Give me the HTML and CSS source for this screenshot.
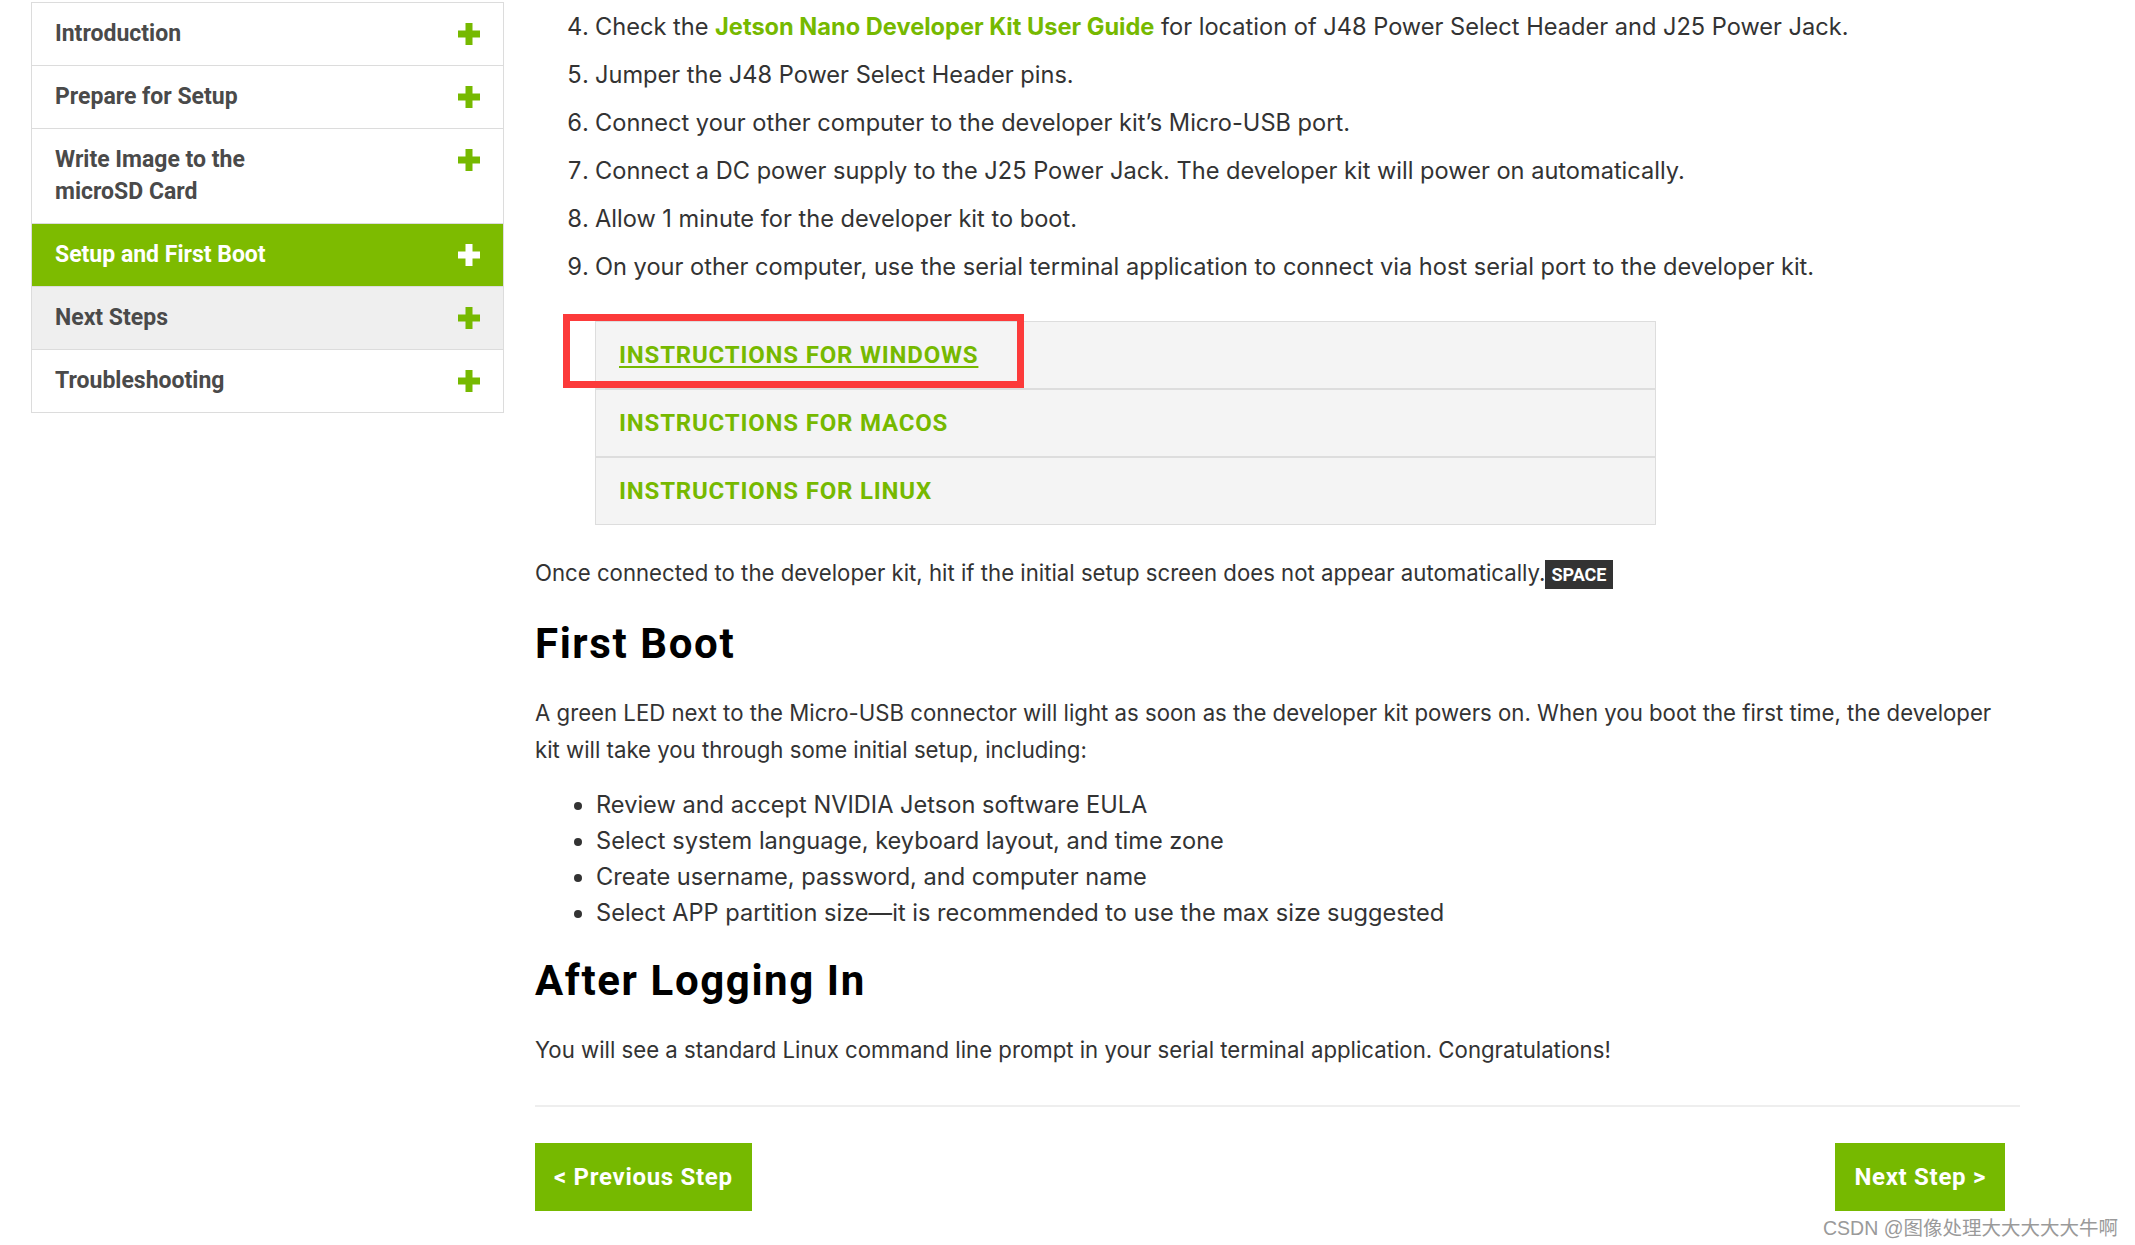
FILE: index.html
```html
<!DOCTYPE html>
<html lang="en">
<head>
    <meta charset="UTF-8">
    <meta name="viewport" content="width=device-width, initial-scale=1.0">
    <title>Setup and First Boot</title>

    <link rel="stylesheet" href="styles.css">

</head>

<body>
    <div class="page">
        <!-- Steps menu -->
        <aside class="sidebar">
            <div class="step-row">
                <span class="step-name">Introduction</span>
                <svg class="plus" viewBox="0 0 22 22"><rect x="7.5" y="0" width="7" height="22"/><rect x="0" y="7.5" width="22" height="7"/></svg>
            </div>
            <div class="step-row">
                <span class="step-name">Prepare for Setup</span>
                <svg class="plus" viewBox="0 0 22 22"><rect x="7.5" y="0" width="7" height="22"/><rect x="0" y="7.5" width="22" height="7"/></svg>
            </div>
            <div class="step-row">
                <span class="step-name">Write Image to the<br>microSD Card</span>
                <svg class="plus" viewBox="0 0 22 22"><rect x="7.5" y="0" width="7" height="22"/><rect x="0" y="7.5" width="22" height="7"/></svg>
            </div>
            <div class="step-row active">
                <span class="step-name">Setup and First Boot</span>
                <svg class="plus" viewBox="0 0 22 22"><rect x="7.5" y="0" width="7" height="22"/><rect x="0" y="7.5" width="22" height="7"/></svg>
            </div>
            <div class="step-row hover">
                <span class="step-name">Next Steps</span>
                <svg class="plus" viewBox="0 0 22 22"><rect x="7.5" y="0" width="7" height="22"/><rect x="0" y="7.5" width="22" height="7"/></svg>
            </div>
            <div class="step-row">
                <span class="step-name">Troubleshooting</span>
                <svg class="plus" viewBox="0 0 22 22"><rect x="7.5" y="0" width="7" height="22"/><rect x="0" y="7.5" width="22" height="7"/></svg>
            </div>
        </aside>

        <!-- Article -->
        <main class="content">
            <ol class="steps" start="4">
                <li>Check the <a href="#" class="green-link">Jetson Nano Developer Kit User Guide</a> for location of J48 Power Select Header and J25 Power Jack.</li>
                <li>Jumper the J48 Power Select Header pins.</li>
                <li>Connect your other computer to the developer kit’s Micro-USB port.</li>
                <li>Connect a DC power supply to the J25 Power Jack. The developer kit will power on automatically.</li>
                <li>Allow 1 minute for the developer kit to boot.</li>
                <li>On your other computer, use the serial terminal application to connect via host serial port to the developer kit.</li>
            </ol>

            <div class="os-tabs">
                <div class="os-tab"><a href="#" class="os-link current">INSTRUCTIONS FOR WINDOWS</a></div>
                <div class="os-tab"><a href="#" class="os-link">INSTRUCTIONS FOR MACOS</a></div>
                <div class="os-tab"><a href="#" class="os-link">INSTRUCTIONS FOR LINUX</a></div>
                <span class="red-mark"></span>
            </div>

            <p class="after-tabs">Once connected to the developer kit, hit if the initial setup screen does not appear automatically.<kbd class="key">SPACE</kbd></p>

            <h2>First Boot</h2>
            <p>A green LED next to the Micro-USB connector will light as soon as the developer kit powers on. When you boot the first time, the developer kit will take you through some initial setup, including:</p>
            <ul class="setup-list">
                <li>Review and accept NVIDIA Jetson software EULA</li>
                <li>Select system language, keyboard layout, and time zone</li>
                <li>Create username, password, and computer name</li>
                <li>Select APP partition size—it is recommended to use the max size suggested</li>
            </ul>

            <h2>After Logging In</h2>
            <p>You will see a standard Linux command line prompt in your serial terminal application. Congratulations!</p>

            <hr class="divider">

            <div class="pager">
                <a href="#" class="pager-btn">&lt; Previous Step</a>
                <a href="#" class="pager-btn">Next Step &gt;</a>
            </div>
        </main>
    </div>

    <div class="watermark">CSDN @图像处理大大大大大牛啊</div>
</body>
</html>
```

FILE: styles.css
```css
body {
    margin: 0;
    font-family: Roboto, 'Liberation Sans', sans-serif;
    color: #333333;
    background: #ffffff;
    height: 1245px;
    overflow: hidden;
}

.page {
    display: flex;
    align-items: flex-start;
    padding-left: 31px;
    gap: 31px;
}

/* sidebar */
.sidebar {
    width: 471px;
    margin-top: 2px;
    border: 1px solid #dcdcdc;
}

.step-row {
    display: flex;
    justify-content: space-between;
    align-items: flex-start;
    padding: 15px 23px 15px 23px;
    border-bottom: 1px solid #dcdcdc;
    font-size: 23px;
    font-weight: 700;
    line-height: 32px;
    color: #4a4a4a;
}

.step-row:last-child {
    border-bottom: none;
}

.step-row.active {
    background: #7dbb00;
    color: #ffffff;
}

.step-row.hover {
    background: #efefef;
}

.plus {
    width: 22px;
    height: 22px;
    margin-top: 5px;
    fill: #76b900;
    flex-shrink: 0;
}

.step-row.active .plus {
    fill: #ffffff;
}

/* content */
.content {
    width: 1485px;
    font-family: Inter, Roboto, sans-serif;
    font-size: 22.2px;
}

.steps {
    margin: 3px 0 0 0;
    padding-left: 60px;
    font-size: 23.6px;
    line-height: 48px;
}

.green-link {
    color: #76b900;
    font-weight: 700;
    text-decoration: none;
}

.os-tabs {
    position: relative;
    margin: 30px 0 0 60px;
    width: 1059px;
    border: 1px solid #dddddd;
    background: #f4f4f4;
}

.os-tab {
    height: 66px;
    line-height: 66px;
    padding-left: 23px;
}

.os-tab + .os-tab {
    border-top: 2px solid #dddddd;
}

.os-link {
    color: #76b900;
    font-family: Roboto, sans-serif;
    font-weight: 700;
    font-size: 24px;
    text-decoration: none;
    letter-spacing: 0.8px;
}

.os-link.current {
    text-decoration: underline;
    text-decoration-thickness: 2px;
    text-underline-offset: 3px;
}

/* screenshot annotation */
.red-mark {
    position: absolute;
    left: -33px;
    top: -8px;
    width: 447px;
    height: 60px;
    border: 7px solid #fc3a3a;
}

p {
    margin: 25px 0 0 0;
    line-height: 37px;
}

.after-tabs {
    margin-top: 29px;
}

.key {
    display: inline-block;
    background: #333333;
    color: #ffffff;
    font-family: Roboto, sans-serif;
    font-weight: 700;
    font-size: 18px;
    line-height: 29px;
    padding: 0 6px;
}

h2 {
    margin: 28px 0 0 0;
    font-family: Roboto, sans-serif;
    font-size: 42px;
    line-height: 50px;
    font-weight: 700;
    color: #000000;
    letter-spacing: 1.6px;
}

.setup-list {
    margin: 19px 0 0 0;
    padding-left: 61px;
    font-size: 23.6px;
    line-height: 36px;
}

.setup-list + h2 {
    margin-top: 25px;
}

.divider {
    margin: 37px 0 0 0;
    border: none;
    border-top: 2px solid #eeeeee;
}

.pager {
    display: flex;
    justify-content: space-between;
    margin-top: 36px;
    padding-right: 15px;
}

.pager-btn {
    display: block;
    background: #76b900;
    color: #ffffff;
    font-family: Roboto, sans-serif;
    font-weight: 700;
    font-size: 24px;
    line-height: 68px;
    padding: 0 19px;
    text-decoration: none;
    letter-spacing: 0.7px;
}

.watermark {
    position: absolute;
    right: 17px;
    bottom: 4px;
    font-family: 'Liberation Sans', 'Noto Sans CJK SC', sans-serif;
    font-size: 19.5px;
    color: #9a9a9a;
    text-shadow: 0 0 2px #ffffff, 0 0 1px #ffffff;
}
```
